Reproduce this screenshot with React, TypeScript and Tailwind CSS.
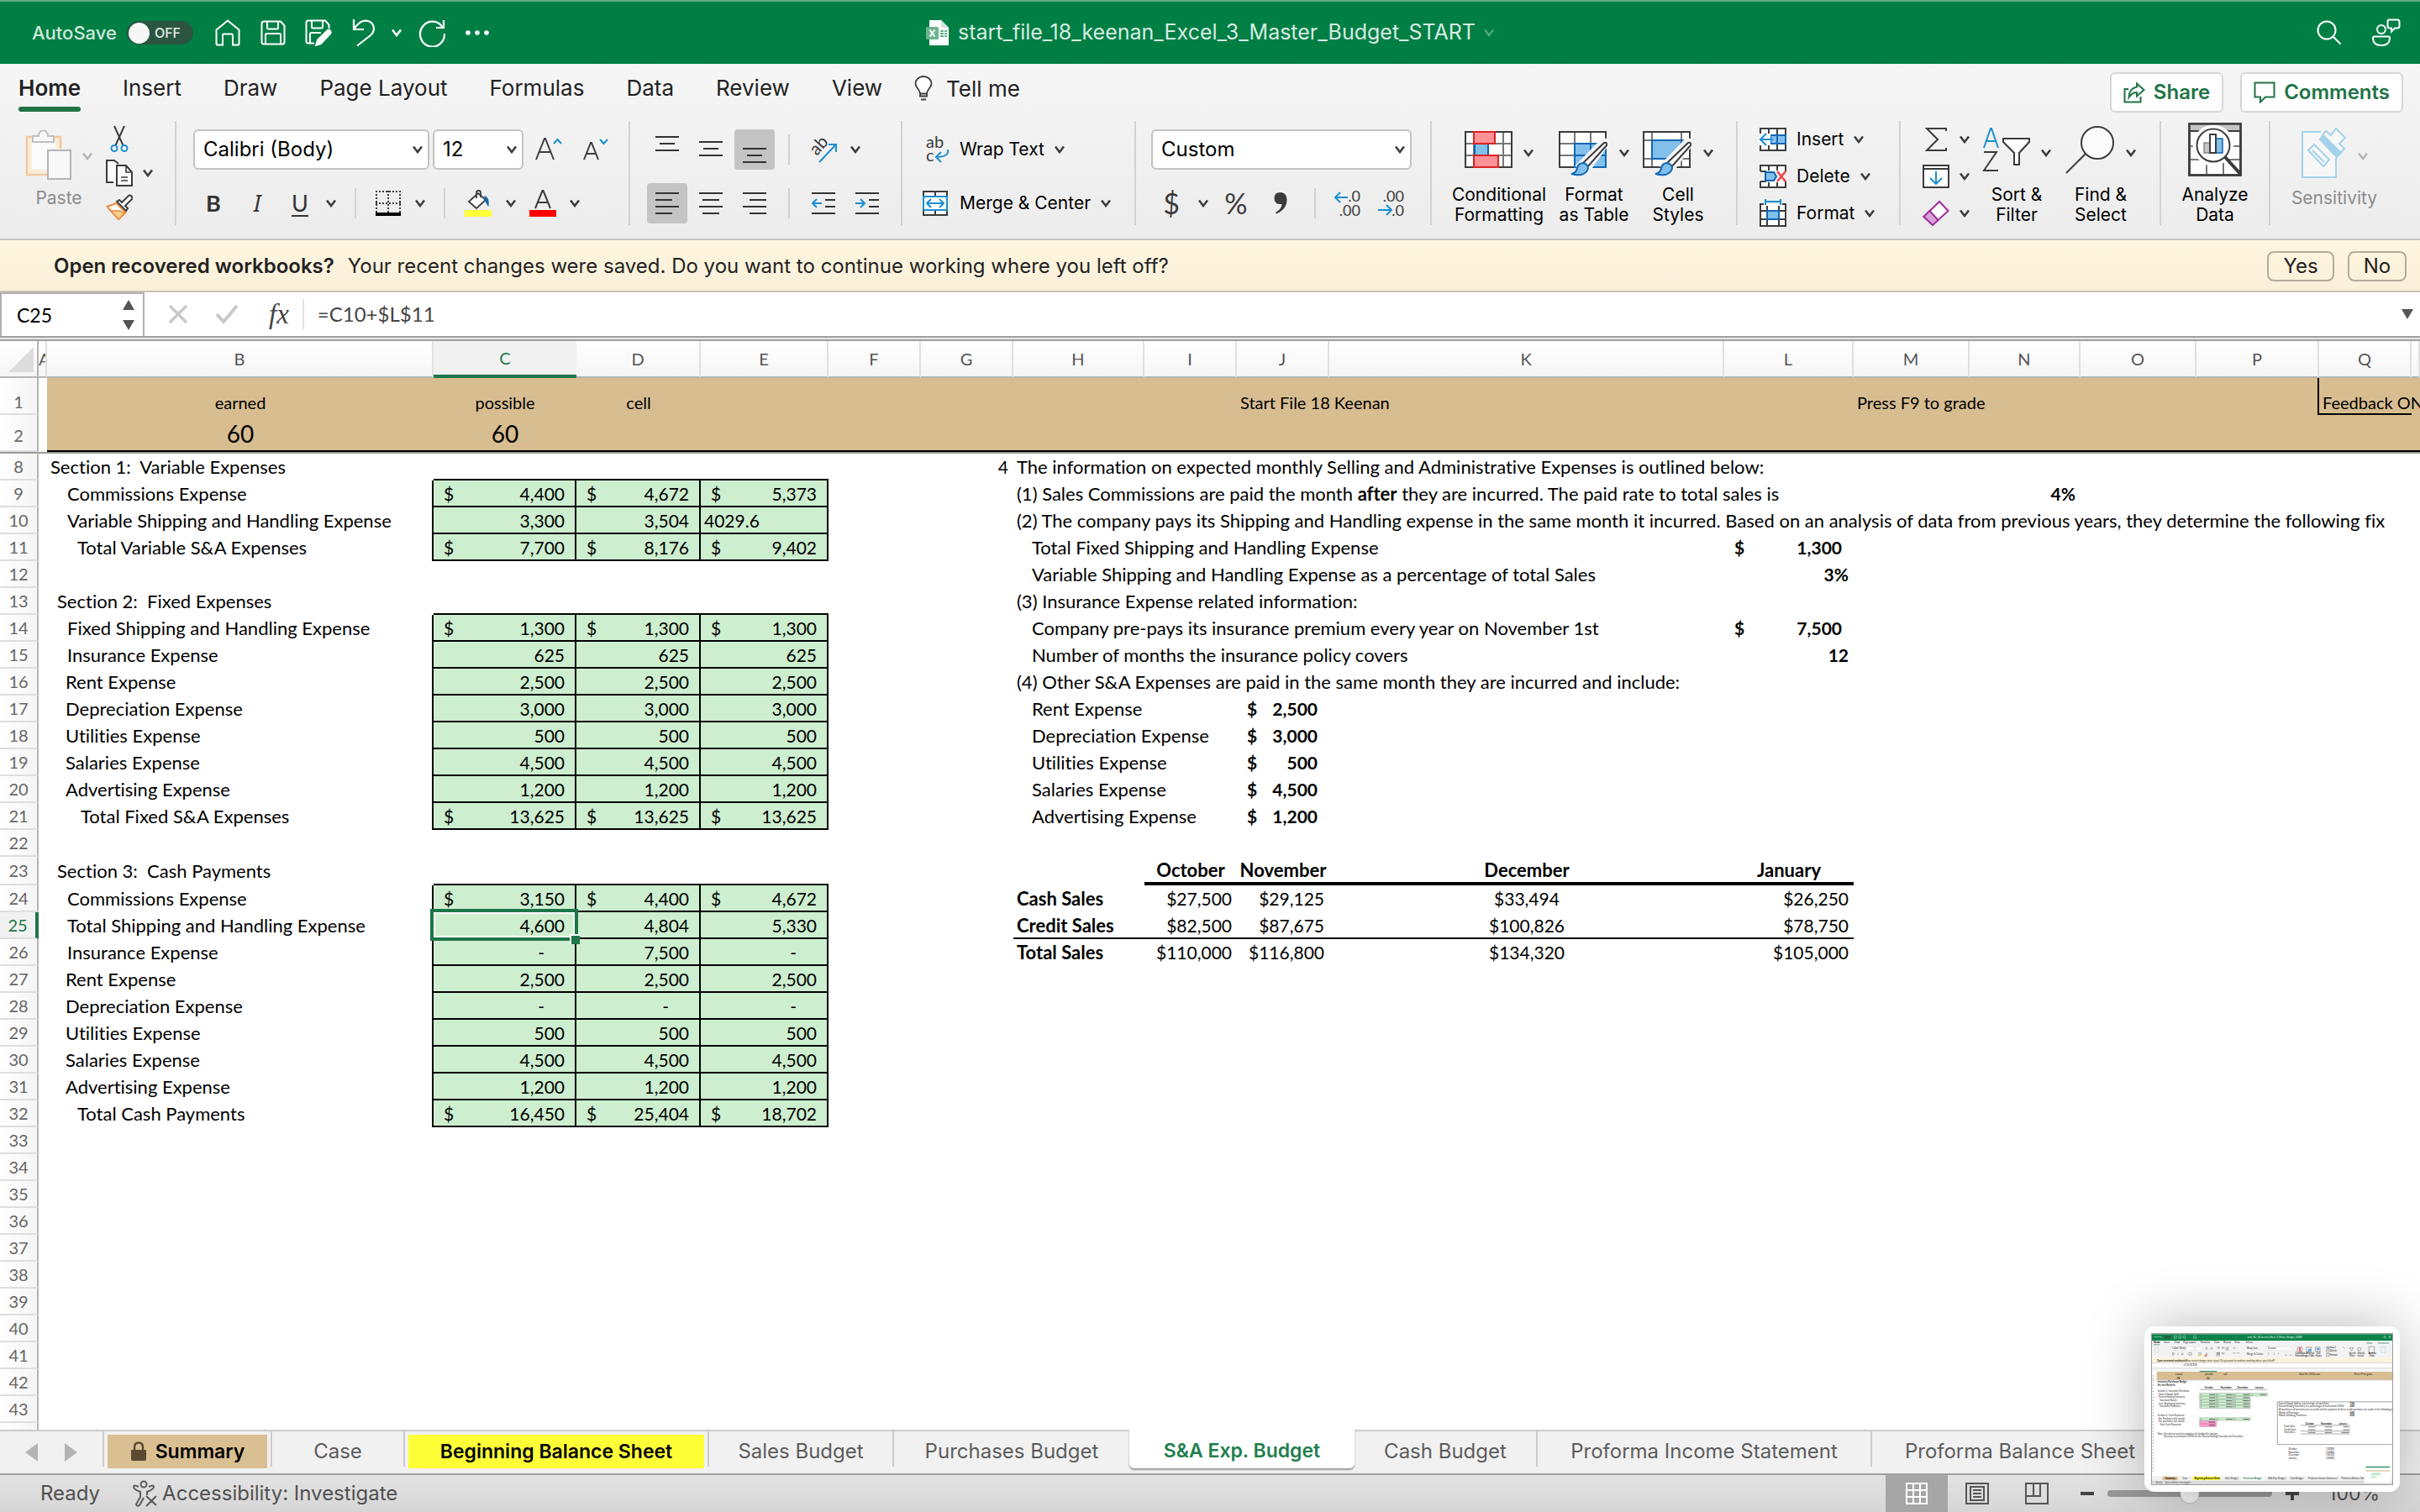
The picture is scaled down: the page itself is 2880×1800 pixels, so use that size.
import React from 'react'

type IconProps = { className?: string }

type Cell = {
    text?: React.ReactNode
    usd?: boolean
    className?: string
}

const columns = [
    { name: 'A', width: 'w-[10px]' },
    { name: 'B', width: 'w-[460px]' },
    { name: 'C', width: 'w-[170px]' },
    { name: 'D', width: 'w-[148px]' },
    { name: 'E', width: 'w-[152px]' },
    { name: 'F', width: 'w-[110px]' },
    { name: 'G', width: 'w-[110px]' },
    { name: 'H', width: 'w-[156px]' },
    { name: 'I', width: 'w-[110px]' },
    { name: 'J', width: 'w-[110px]' },
    { name: 'K', width: 'w-[470px]' },
    { name: 'L', width: 'w-[154px]' },
    { name: 'M', width: 'w-[138px]' },
    { name: 'N', width: 'w-[132px]' },
    { name: 'O', width: 'w-[138px]' },
    { name: 'P', width: 'w-[146px]' },
    { name: 'Q', width: 'w-[110px]' },
    { name: '', width: '' },
]

const rowNumbers = [1, 2, ...Array.from({ length: 37 }, (_, i) => i + 8)]

// label, indent, then the October / November / December amounts
const budgetRows: Record<number, [string, string, string[]?]> = {
    8: ['Section 1:  Variable Expenses', 'pl-1'],
    9: ['Commissions Expense', 'pl-6', ['$4,400', '$4,672', '$5,373']],
    10: ['Variable Shipping and Handling Expense', 'pl-6', ['3,300', '3,504', '4029.6']],
    11: ['Total Variable S&A Expenses', 'pl-9', ['$7,700', '$8,176', '$9,402']],
    13: ['Section 2:  Fixed Expenses', 'pl-3'],
    14: ['Fixed Shipping and Handling Expense', 'pl-6', ['$1,300', '$1,300', '$1,300']],
    15: ['Insurance Expense', 'pl-6', ['625', '625', '625']],
    16: ['Rent Expense', 'pl-[22px]', ['2,500', '2,500', '2,500']],
    17: ['Depreciation Expense', 'pl-[22px]', ['3,000', '3,000', '3,000']],
    18: ['Utilities Expense', 'pl-[22px]', ['500', '500', '500']],
    19: ['Salaries Expense', 'pl-[22px]', ['4,500', '4,500', '4,500']],
    20: ['Advertising Expense', 'pl-[22px]', ['1,200', '1,200', '1,200']],
    21: ['Total Fixed S&A Expenses', 'pl-10', ['$13,625', '$13,625', '$13,625']],
    23: ['Section 3:  Cash Payments', 'pl-3'],
    24: ['Commissions Expense', 'pl-6', ['$3,150', '$4,400', '$4,672']],
    25: ['Total Shipping and Handling Expense', 'pl-6', ['4,600', '4,804', '5,330']],
    26: ['Insurance Expense', 'pl-6', ['-', '7,500', '-']],
    27: ['Rent Expense', 'pl-[22px]', ['2,500', '2,500', '2,500']],
    28: ['Depreciation Expense', 'pl-[22px]', ['-', '-', '-']],
    29: ['Utilities Expense', 'pl-[22px]', ['500', '500', '500']],
    30: ['Salaries Expense', 'pl-[22px]', ['4,500', '4,500', '4,500']],
    31: ['Advertising Expense', 'pl-[22px]', ['1,200', '1,200', '1,200']],
    32: ['Total Cash Payments', 'pl-9', ['$16,450', '$25,404', '$18,702']],
}

const cells: Record<string, Cell> = {
    B1: { text: 'earned', className: 'text-center' },
    C1: { text: 'possible', className: 'text-center' },
    D1: { text: 'cell', className: 'text-center' },
    J1: { text: 'Start File 18 Keenan', className: 'pl-1' },
    M1: { text: 'Press F9 to grade', className: 'pl-1' },
    Q1: { text: 'Feedback ON', className: 'pl-1' },
    B2: { text: '60', className: 'text-center' },
    C2: { text: '60', className: 'text-center' },
    G8: { text: '4', className: 'pr-1.5 text-right' },
    H8: { text: 'The information on expected monthly Selling and Administrative Expenses is outlined below:', className: 'pl-1' },
    H9: {
        text: <>(1) Sales Commissions are paid the month <b>after</b> they are incurred. The paid rate to total sales is</>,
        className: 'pl-1',
    },
    N9: { text: '4%', className: 'pr-1.5 text-right font-bold' },
    H10: {
        text: '(2) The company pays its Shipping and Handling expense in the same month it incurred. Based on an analysis of data from previous years, they determine the following fix',
        className: 'pl-1',
    },
    H11: { text: 'Total Fixed Shipping and Handling Expense', className: 'pl-[22px]' },
    L11: { text: '1,300', usd: true, className: 'font-bold' },
    H12: { text: 'Variable Shipping and Handling Expense as a percentage of total Sales', className: 'pl-[22px]' },
    L12: { text: '3%', className: 'pr-1.5 text-right font-bold' },
    H13: { text: '(3) Insurance Expense related information:', className: 'pl-1' },
    H14: { text: 'Company pre-pays its insurance premium every year on November 1st', className: 'pl-[22px]' },
    L14: { text: '7,500', usd: true, className: 'font-bold' },
    H15: { text: 'Number of months the insurance policy covers', className: 'pl-[22px]' },
    L15: { text: '12', className: 'pr-1.5 text-right font-bold' },
    H16: { text: '(4) Other S&A Expenses are paid in the same month they are incurred and include:', className: 'pl-1' },
    H17: { text: 'Rent Expense', className: 'pl-[22px]' },
    J17: { text: '2,500', usd: true, className: 'font-bold' },
    H18: { text: 'Depreciation Expense', className: 'pl-[22px]' },
    J18: { text: '3,000', usd: true, className: 'font-bold' },
    H19: { text: 'Utilities Expense', className: 'pl-[22px]' },
    J19: { text: '500', usd: true, className: 'font-bold' },
    H20: { text: 'Salaries Expense', className: 'pl-[22px]' },
    J20: { text: '4,500', usd: true, className: 'font-bold' },
    H21: { text: 'Advertising Expense', className: 'pl-[22px]' },
    J21: { text: '1,200', usd: true, className: 'font-bold' },
    I23: { text: 'October', className: 'text-center font-bold' },
    J23: { text: 'November', className: 'text-center font-bold' },
    K23: { text: 'December', className: 'text-center font-bold' },
    L23: { text: 'January', className: 'text-center font-bold' },
    H24: { text: 'Cash Sales', className: 'pl-1 font-bold' },
    I24: { text: '$27,500', className: 'pr-1.5 text-right' },
    J24: { text: '$29,125', className: 'pr-1.5 text-right' },
    K24: { text: '$33,494', className: 'text-center' },
    L24: { text: '$26,250', className: 'pr-1.5 text-right' },
    H25: { text: 'Credit Sales', className: 'pl-1 font-bold' },
    I25: { text: '$82,500', className: 'pr-1.5 text-right' },
    J25: { text: '$87,675', className: 'pr-1.5 text-right' },
    K25: { text: '$100,826', className: 'text-center' },
    L25: { text: '$78,750', className: 'pr-1.5 text-right' },
    H26: { text: 'Total Sales', className: 'pl-1 font-bold' },
    I26: { text: '$110,000', className: 'pr-1.5 text-right' },
    J26: { text: '$116,800', className: 'pr-1.5 text-right' },
    K26: { text: '$134,320', className: 'text-center' },
    L26: { text: '$105,000', className: 'pr-1.5 text-right' },
}

Object.entries(budgetRows).forEach(([row, [label, indent, amounts]]) => {
    cells[`B${row}`] = { text: label, className: `${indent} whitespace-pre` }
    amounts?.forEach((amount, i) => {
        const key = `${'CDE'[i]}${row}`
        if (key === 'E10') cells[key] = { text: amount, className: 'pl-1' }
        else if (amount === '-') cells[key] = { text: '-', className: 'pr-9 text-right' }
        else if (amount[0] === '$') cells[key] = { text: amount.slice(1), usd: true }
        else cells[key] = { text: amount, className: 'pr-3 text-right' }
    })
})

/* ---------- icons ---------- */

function Chevron({ className = 'text-[#3c3c3c]' }: IconProps) {
    return (
        <svg viewBox="0 0 12 10" className={`h-[10px] w-3 shrink-0 ${className}`} fill="none" stroke="currentColor" strokeWidth="2.6">
            <path d="M1 1.5 6 8 11 1.5" />
        </svg>
    )
}

function HomeIcon() {
    return (
        <svg viewBox="0 0 30 32" className="h-8 w-[30px]" fill="none" stroke="white" strokeWidth="2">
            <path d="M1.500 12.500 15 1.500l13.500 11V29q0 1.500-1.500 1.500h-6V19q0-1.500-1.500-1.500h-9Q9 17.500 9 19v11.500H3q-1.500 0-1.500-1.500Z" />
        </svg>
    )
}

function SaveIcon() {
    return (
        <svg viewBox="0 0 30 30" className="size-[30px]" fill="none" stroke="white" strokeWidth="2">
            <path d="M4 1.500h20l4.500 5V26q0 2.500-2.500 2.500H4Q1.500 28.500 1.500 26V4Q1.500 1.500 4 1.500Z" />
            <path d="M8 2v7q0 1.500 1.500 1.500h10Q21 10.500 21 9V2M6 28V17.500Q6 16 7.500 16h15q1.500 0 1.500 1.500V28" />
        </svg>
    )
}

function SaveAsIcon() {
    return (
        <svg viewBox="0 0 32 32" className="size-8" fill="none" stroke="white" strokeWidth="2">
            <path d="M11 28.500H4Q1.500 28.500 1.500 26V4Q1.500 1.500 4 1.500h20l4.500 5V11" />
            <path d="M8 2v7q0 1.500 1.500 1.500h10Q21 10.500 21 9V2M6 28V17.500Q6 16 7.500 16H19" />
            <path d="m13 31 2-6.500L27 13q4-1 3.500 3.500L19 29Z" fill="white" />
        </svg>
    )
}

function UndoIcon() {
    return (
        <svg viewBox="0 0 28 34" className="h-[34px] w-7" fill="none" stroke="white" strokeWidth="2.200">
            <path d="M2 1v12h12M2 13C7 5 13 1.500 19 3c8 2.500 9 11.500 3 17L6 32.500" />
        </svg>
    )
}

function RedoIcon() {
    return (
        <svg viewBox="0 0 34 34" className="size-[34px]" fill="none" stroke="white" strokeWidth="2.200">
            <path d="M31 2v9h-9M30 11A14.500 15 0 1 0 32 18" />
        </svg>
    )
}

function WorkbookIcon() {
    return (
        <svg viewBox="0 0 28 30" className="h-[30px] w-7">
            <path d="M4 0h14l9 9v21H4Z" fill="white" />
            <path d="M18 0v9h9Z" fill="#d5e4db" />
            <path d="M17 12h4v2h-4zM22 12h3v2h-3zM17 15h4v2h-4zM22 15h3v2h-3zM17 18h4v2h-4zM22 18h3v2h-3z" fill="#5fae86" />
            <rect y="8" width="15" height="15" rx="1.500" fill="#6db38f" />
            <path d="m4.500 11.500 6 8M10.500 11.500l-6 8" stroke="white" strokeWidth="2" />
        </svg>
    )
}

function SearchIcon() {
    return (
        <svg viewBox="0 0 30 30" className="size-[30px]" fill="none" stroke="white" strokeWidth="2">
            <circle cx="12" cy="12" r="10.500" />
            <path d="m19.500 19.500 9 9" />
        </svg>
    )
}

function PeopleIcon() {
    return (
        <svg viewBox="0 0 34 34" className="size-[34px]" fill="none" stroke="white" strokeWidth="2">
            <circle cx="11" cy="13" r="5" />
            <path d="M2 21.500h18q1 0 1 1.500 0 9-10 9T1 23q0-1.500 1-1.500ZM20 1.500h10q2.500 0 2.500 2.500v5q0 2.500-2.500 2.500h-3l-4 4v-4h-2q-2.500 0-2.500-2.500V4q0-2.500 1.500-2.500Z" />
        </svg>
    )
}

function BulbIcon() {
    return (
        <svg viewBox="0 0 22 30" className="h-[30px] w-[22px]" fill="none" stroke="#3c3c3c" strokeWidth="1.800">
            <path d="M7 21.500C7 16 1.500 15 1.500 9.500a9.500 8.500 0 0 1 19 0C20.500 15 15 16 15 21.500v3H7ZM7 21.500h8" fill="white" />
            <path d="M8 28.500h6" strokeWidth="2" />
        </svg>
    )
}

function ShareIcon() {
    return (
        <svg viewBox="0 0 26 26" className="size-[26px]" fill="none" stroke="#217346" strokeWidth="2">
            <path d="M6 9H1.500v15.500h19V18" />
            <path d="M16 2.500v4Q7 8 6.500 19q4-6 9.500-6v4.500L24.500 10Z" />
        </svg>
    )
}

function CommentIcon() {
    return (
        <svg viewBox="0 0 26 26" className="size-[26px]" fill="none" stroke="#217346" strokeWidth="2">
            <path d="M1.500 1.500h23v17H14L8 24.500v-6H1.500Z" />
        </svg>
    )
}

function PasteIcon() {
    return (
        <svg viewBox="0 0 56 60" className="h-[60px] w-14" fill="none" strokeWidth="2">
            <path d="M9 9H2v45h24M33 9h9v14" stroke="#f3c79d" strokeWidth="2.500" />
            <path d="M4 11h36v12H26v29H4Z" fill="#f9edd4" />
            <path d="M8 15h28v8H26v25H8Z" fill="#fbfbfb" />
            <path d="M9 15V8h7q0-6.500 5.500-6.500T27 8h7v7Z" fill="#f8f8f8" stroke="#c0c0c0" />
            <path d="M27 25h27v34H27Z" fill="#f8f8f8" stroke="#b5b5b5" />
        </svg>
    )
}

function CutIcon() {
    return (
        <svg viewBox="0 0 22 32" className="h-8 w-[22px]" fill="none" strokeWidth="2">
            <path d="m5 1 10.500 23M17 1 6.500 24" stroke="#3c3c3c" />
            <circle cx="5" cy="27.500" r="3.500" stroke="#1a8fd1" />
            <circle cx="17" cy="27.500" r="3.500" stroke="#1a8fd1" />
        </svg>
    )
}

function CopyIcon() {
    return (
        <svg viewBox="0 0 32 32" className="size-8" fill="#fbfbfb" stroke="#3c3c3c" strokeWidth="2">
            <path d="M9 27H1V1h9l5 4" />
            <path d="M13 7h11l7 8v16H13Z" />
            <path d="M24 7v8h7M18 21h8M18 25h8" fill="none" strokeWidth="1.600" />
        </svg>
    )
}

function PainterIcon() {
    return (
        <svg viewBox="0 0 32 32" className="size-8" fill="none" strokeWidth="2">
            <path d="m1.500 15 11-4 11 11L15 30Z" fill="#fff" stroke="#ee8a3c" />
            <path d="m6 20 11 0 5 3-7 7Z" fill="#f7cf8f" stroke="#ee8a3c" strokeWidth="1.500" />
            <path d="m13 9 3-2 3 3 8-8q2-1 3.500.5T31 6l-8 8 3 3-2 3Z" fill="#fbfbfb" stroke="#3c3c3c" />
        </svg>
    )
}

function FontSizeIcon({ shrink = false }: { shrink?: boolean }) {
    return (
        <svg viewBox="0 0 34 32" className="h-8 w-[34px]" fill="none" strokeWidth="2">
            {shrink ? (
                <>
                    <path d="M3 28 11 8h1l8 20M6 21h11" stroke="#3c3c3c" />
                    <path d="m22 4 4.500 5L31 4" stroke="#1a8fd1" />
                </>
            ) : (
                <>
                    <path d="m1 28 10-25h1l10 25M5 19h13" stroke="#3c3c3c" />
                    <path d="m22 9 4.500-5L31 9" stroke="#1a8fd1" />
                </>
            )}
        </svg>
    )
}

function BordersIcon() {
    return (
        <svg viewBox="0 0 30 30" className="size-[30px]" fill="none" stroke="#3c3c3c" strokeWidth="2">
            <path d="M0 1h30M0 15h30M1 0v26M15 0v26M29 0v26" strokeDasharray="2 2" />
            <path d="M0 28h30" stroke="black" strokeWidth="4" />
        </svg>
    )
}

function FillColorIcon() {
    return (
        <svg viewBox="0 0 32 32" className="size-8" fill="none" stroke="#3c3c3c" strokeWidth="1.800">
            <path d="m5 14 11-10 9 8-11 10ZM14 10V3q0-2 2.500-2T19 3v6" fill="#fff" />
            <path d="M23 7q7 1 5.500 13Q24 15 24 10Z" fill="#1067b3" stroke="none" />
            <path d="M0 24h32v8H0Z" fill="#ffff38" stroke="none" />
        </svg>
    )
}

function FontColorIcon() {
    return (
        <svg viewBox="0 0 32 32" className="size-8" fill="none" stroke="#3c3c3c" strokeWidth="2">
            <path d="m7 22 8.500-21h1L25 22M10 15h12" />
            <path d="M0 24h32v8H0Z" fill="#ff0000" stroke="none" />
        </svg>
    )
}

// y position, left and right end of every bar
function LinesIcon({ lines }: { lines: [number, number, number][] }) {
    return (
        <svg viewBox="0 0 28 32" className="h-8 w-7" stroke="#333" strokeWidth="2" shapeRendering="crispEdges">
            {lines.map(([y, from, to]) => (
                <path key={y} d={`M${from} ${y}H${to}`} />
            ))}
        </svg>
    )
}

function IndentIcon({ out = false }: { out?: boolean }) {
    return (
        <svg viewBox="0 0 28 32" className="h-8 w-7" fill="none" stroke="#333" strokeWidth="2">
            <path d="M0 4h28M16 12h12M16 20h12M0 28h28" />
            <path d={out ? 'M12 16H1.500M6 11l-5 5 5 5' : 'M0 16h11M6 11l5 5-5 5'} stroke="#1a8fd1" />
        </svg>
    )
}

function OrientationIcon() {
    return (
        <svg viewBox="0 0 34 32" className="h-8 w-[34px] overflow-visible" fill="none" strokeWidth="2">
            <text x="0" y="0" transform="translate(9 24) rotate(-48)" fontSize="21" fontFamily="Lato" fill="#3c3c3c">ab</text>
            <path d="m12 31 19-20M23 10h9v9" stroke="#1a8fd1" />
        </svg>
    )
}

function WrapIcon() {
    return (
        <svg viewBox="0 0 30 34" className="h-[34px] w-[30px] overflow-visible" fill="none" strokeWidth="2">
            <text x="4" y="15" fontSize="20" fontFamily="Lato" fill="#3c3c3c">ab</text>
            <text x="4" y="31" fontSize="20" fontFamily="Lato" fill="#3c3c3c">c</text>
            <path d="M30 17q2 9-14 9M22 20l-6 6 6 6" stroke="#1a8fd1" />
        </svg>
    )
}

function MergeIcon() {
    return (
        <svg viewBox="0 0 30 30" className="size-[30px]" fill="none" stroke="#3c3c3c" strokeWidth="2">
            <path d="M1 1h28v28H1ZM15 1v6M15 23v6" fill="#fafafa" />
            <path d="M1 7h28v16H1Z" fill="#fff" stroke="#1a8fd1" />
            <path d="M5 15h20M10 10l-5 5 5 5M20 10l5 5-5 5" stroke="#1a8fd1" />
        </svg>
    )
}

function DecimalIcon({ less = false }: { less?: boolean }) {
    return (
        <svg viewBox="0 0 32 32" className="size-8 overflow-visible" fill="none" stroke="#1a8fd1" strokeWidth="2">
            <g fontSize="18" fontFamily="Lato" fill="#3c3c3c" stroke="none" textAnchor="end">
                <text x="31" y="14">{less ? '.00' : '.0'}</text>
                <text x="31" y="31">{less ? '.0' : '.00'}</text>
            </g>
            {less ? <path d="M0 24h15M10 18l6 6-6 6" /> : <path d="M16 9H2M7 3 1 9l6 6" />}
        </svg>
    )
}

function ConditionalIcon() {
    return (
        <svg viewBox="0 0 58 58" className="size-[58px]" fill="none" stroke="#3c3c3c" strokeWidth="2">
            <path d="M1 5h55v42H1Z" fill="#fff" />
            <path d="M1 19h55M1 33h55M11 5v42M46 5v42" stroke="#777" />
            <path d="M12 19h16v14H12Z" fill="#83bfeb" stroke="#1067b3" />
            <path d="M29 20h16v12H29Z" fill="#fff" stroke="none" />
            <path d="M1 5h55v42H1Z" />
            <path d="M11 5h25v14H11ZM11 33h29v14H11Z" fill="#ff9297" stroke="#dd2222" />
        </svg>
    )
}

function Brush() {
    return (
        <>
            <path d="M24 45 52 16q5-2 5 3L34 51Z" fill="#f4f4f4" stroke="#f4f4f4" strokeWidth="6" />
            <path d="M28 43 54 18q4-1 3 3L33 48Z" fill="#fff" stroke="#3c3c3c" />
            <path d="M15 55q6-1 7-7t8-6q7 3 4 9-5 8-19 4Z" fill="#83bfeb" stroke="#1067b3" />
        </>
    )
}

function FormatTableIcon() {
    return (
        <svg viewBox="0 0 60 58" className="h-[58px] w-[60px]" fill="none" stroke="#3c3c3c" strokeWidth="2">
            <path d="M1 5h55v42H1Z" fill="#fff" />
            <path d="M1 19h55M1 33h55M19 5v42M38 5v42" stroke="#777" />
            <path d="M1 5h55v42H1Z" />
            <path d="M19 19h37v28H19ZM19 33h37M38 19v28" fill="#83bfeb" stroke="#1067b3" />
            <Brush />
        </svg>
    )
}

function CellStylesIcon() {
    return (
        <svg viewBox="0 0 60 58" className="h-[58px] w-[60px]" fill="none" stroke="#3c3c3c" strokeWidth="2">
            <path d="M1 5h55v42H1Z" fill="#fff" />
            <path d="M1 15h55M1 37h55M11 5v42M46 5v42" stroke="#777" />
            <path d="M1 5h55v42H1Z" />
            <path d="M11 15h35v22H11Z" fill="#83bfeb" stroke="#1067b3" />
            <Brush />
        </svg>
    )
}

function InsertIcon() {
    return (
        <svg viewBox="0 0 32 30" className="h-[30px] w-8" fill="none" stroke="#3c3c3c" strokeWidth="2">
            <path d="M1 2h30v26H1ZM11 2v26M21 2v26" fill="#fff" />
            <path d="M13 10h18v10H13ZM21 10v10" fill="#83bfeb" stroke="#1067b3" />
            <path d="M0 8h13v14H0Z" fill="#fff" stroke="none" />
            <path d="M16 15H1.500M8 8l-7 7 7 7" stroke="#1a8fd1" />
        </svg>
    )
}

function DeleteIcon() {
    return (
        <svg viewBox="0 0 32 30" className="h-[30px] w-8" fill="none" stroke="#3c3c3c" strokeWidth="2">
            <path d="M1 9V2h30v7M1 21v7h30v-7M1 9h7M1 21h7M11 2v6M21 2v6M11 22v6M21 22v6" fill="#fff" />
            <path d="M7 10h10l3 5-3 5H7Z" fill="#83bfeb" stroke="#1067b3" />
            <path d="m21 9 10 12M31 9 21 21" stroke="#ee4444" strokeWidth="2.500" />
        </svg>
    )
}

function FormatIcon() {
    return (
        <svg viewBox="0 0 32 34" className="h-[34px] w-8" fill="none" stroke="#3c3c3c" strokeWidth="2">
            <path d="M5 6H1v26h30V6h-4M9 8v24M23 8v24M1 14h30M1 24h30" fill="#fff" />
            <path d="M9 14h14v10H9Z" fill="#83bfeb" stroke="#1067b3" />
            <path d="M7 3h18M7 0v7M25 0v7" stroke="#1a8fd1" />
        </svg>
    )
}

function SigmaIcon() {
    return (
        <svg viewBox="0 0 32 30" className="h-[30px] w-8" fill="none" stroke="#3c3c3c" strokeWidth="2">
            <path d="M28 5V2H5l13 13L5 28h23v-3" />
        </svg>
    )
}

function FillDownIcon() {
    return (
        <svg viewBox="0 0 32 30" className="h-[30px] w-8" fill="none" stroke="#3c3c3c" strokeWidth="2">
            <path d="M1 2h30v26H1ZM1 6h30" fill="#fff" />
            <path d="M16 9v14M9 17l7 7 7-7" stroke="#1a8fd1" />
        </svg>
    )
}

function EraserIcon() {
    return (
        <svg viewBox="0 0 32 32" className="size-8" fill="#fff" stroke="#9c2f9c" strokeWidth="2">
            <path d="M1.500 20 20 2l10.500 11L12 30Z" />
            <path d="m1.500 20 7-7L18.500 24 12 30Z" fill="#dba0db" />
        </svg>
    )
}

function SortFilterIcon() {
    return (
        <svg viewBox="0 0 58 58" className="size-[58px]" fill="none" stroke="#3c3c3c" strokeWidth="2">
            <path d="m2 24 8-23h1l8 23M5 16h11" stroke="#1a8fd1" />
            <path d="M2 29h15L2 51h17" />
            <path d="M25 13h31v4L44 30v14h-6V30L25 17Z" fill="#fff" />
        </svg>
    )
}

function FindIcon() {
    return (
        <svg viewBox="0 0 60 60" className="size-[60px]" fill="none" stroke="#3c3c3c" strokeWidth="2">
            <circle cx="38" cy="20" r="19" fill="#fbfbfb" />
            <path d="M24 33 1 56" />
        </svg>
    )
}

function AnalyzeIcon() {
    return (
        <svg viewBox="0 0 64 64" className="size-16" fill="none" stroke="#3c3c3c" strokeWidth="2.500">
            <path d="M1.500 1.500h61v61h-61Z" fill="#fff" />
            <path d="M2 2h60v8H2Z" fill="#c5c5c5" stroke="none" />
            <path d="M1 10h62" strokeWidth="2" />
            <path d="M2 28h60M2 44h60M22 44v18M42 44v18" stroke="#777" strokeWidth="2" />
            <circle cx="30" cy="27" r="23" fill="#fff" stroke="#fff" />
            <path d="M1.500 1.500h61v61h-61Z" />
            <circle cx="30" cy="27" r="19.500" fill="#fff" strokeWidth="2" />
            <path d="M19 24h8v12h-8Z" fill="#c5c5c5" stroke="#888" strokeWidth="1.500" />
            <path d="M33 19h8v17h-8Z" fill="#83bfeb" stroke="#1067b3" strokeWidth="1.500" />
            <path d="M26 14h7v22h-7Z" fill="#fff" strokeWidth="2" />
            <path d="m44 41 19 21" strokeWidth="4" />
        </svg>
    )
}

function SensitivityIcon() {
    return (
        <svg viewBox="0 0 56 62" className="h-[62px] w-14" fill="none" stroke="#a3d2ea" strokeWidth="2">
            <path d="M24 5H2v54h40V36" fill="#f7f7f7" />
            <path d="M9 27 16 20 34 38l-7 8ZM14 27l14 14" fill="#f7f7f7" />
            <path d="m24 12 6-8 6 5 6-8 11 11-7 7 6 6-7 7Z" fill="#f7f7f7" />
            <path d="m23 14 5-4 20 20-5 5Z" fill="#a3d2ea" />
        </svg>
    )
}

function AccessibilityIcon() {
    return (
        <svg viewBox="0 0 32 32" className="size-8" fill="none" stroke="#5a5a5a" strokeWidth="2">
            <circle cx="14" cy="5" r="3.500" />
            <path d="M8 8Q2 5 2 8t8 6v6L5 29q1 3 4 1l5-9M20 8q6-3 6 0t-8 6v4M17 19l12 11M29 19 17 31" />
        </svg>
    )
}

/* ---------- ribbon pieces ---------- */

function IconButton({ label, width = 'w-12', active = false, children }: { label: string; width?: string; active?: boolean; children: React.ReactNode }) {
    return (
        <button
            aria-label={label}
            className={`flex h-12 shrink-0 items-center justify-center rounded ${width} ${active ? 'bg-[#c4c4c4]' : ''}`}
        >
            {children}
        </button>
    )
}

function MenuButton({ label }: { label: string }) {
    return (
        <IconButton label={label} width="w-7">
            <Chevron />
        </IconButton>
    )
}

function Divider({ gap }: { gap: string }) {
    return <span className={`h-9 w-0.5 shrink-0 bg-[#d2d2d2] ${gap}`} />
}

function Group({ className, children }: { className: string; children: React.ReactNode }) {
    return <section className={`flex h-[124px] shrink-0 border-r-2 border-[#d2d2d2] ${className}`}>{children}</section>
}

function BigButton({ icon, lines, width, menu = true, faded = false }: { icon: React.ReactNode; lines: string[]; width: string; menu?: boolean; faded?: boolean }) {
    return (
        <button className={`flex flex-col items-center gap-1.5 text-[21px] leading-6 ${width} ${faded ? 'text-[#8c8c8c]' : 'text-black'}`}>
            <span className="flex h-[74px] items-end justify-center gap-3 pb-1">
                {icon}
                {menu && (
                    <span className="flex h-14 items-center">
                        <Chevron className={faded ? 'text-[#b5b5b5]' : 'text-[#3c3c3c]'} />
                    </span>
                )}
            </span>
            <span className="flex flex-col whitespace-nowrap">
                {lines.map((line) => (
                    <span key={line}>{line}</span>
                ))}
            </span>
        </button>
    )
}

function SelectBox({ label, value, width }: { label: string; value: string; width: string }) {
    return (
        <label className={`relative flex items-center ${width}`}>
            <select
                aria-label={label}
                defaultValue={value}
                className="h-12 w-full appearance-none rounded-md border-2 border-[#c3c3c3] bg-white pl-2.5 text-2xl text-black"
            >
                <option>{value}</option>
            </select>
            <span className="pointer-events-none absolute right-2">
                <Chevron />
            </span>
        </label>
    )
}

function TitleBar() {
    return (
        <header className="grid h-[76px] shrink-0 grid-cols-[1fr_auto_1fr] items-center border-t-2 border-[#5fa983] bg-[#007f45] text-white">
            <div className="flex items-center pl-[38px]">
                <label className="flex items-center gap-3 text-[22px] font-medium text-[#cfe8db]">
                    AutoSave
                    <input type="checkbox" className="peer sr-only" />
                    <span className="flex h-[28px] w-[79px] items-center gap-1.5 rounded-full bg-[#2b5540] pl-0.5 text-[16px] text-[#e0ece6]">
                        <span className="size-[25px] rounded-full bg-[#f7f7f7]" />
                        OFF
                    </span>
                </label>
                <div className="flex items-center pl-3.5">
                    <IconButton label="Home" width="w-[54px]"><HomeIcon /></IconButton>
                    <IconButton label="Save" width="w-[54px]"><SaveIcon /></IconButton>
                    <IconButton label="Save As" width="w-[54px]"><SaveAsIcon /></IconButton>
                    <IconButton label="Undo" width="w-[54px]"><UndoIcon /></IconButton>
                    <IconButton label="Undo history" width="w-6"><Chevron className="text-white" /></IconButton>
                    <IconButton label="Redo" width="w-[60px]"><RedoIcon /></IconButton>
                    <IconButton label="More" width="w-12">
                        <svg viewBox="0 0 28 6" className="h-1.5 w-7" fill="white">
                            <circle cx="3" cy="3" r="2.800" />
                            <circle cx="14" cy="3" r="2.800" />
                            <circle cx="25" cy="3" r="2.800" />
                        </svg>
                    </IconButton>
                </div>
            </div>
            <h1 className="flex items-center gap-2.5 text-[25px] text-[#d7ece1]">
                <WorkbookIcon />
                start_file_18_keenan_Excel_3_Master_Budget_START
                <Chevron className="text-[#4da67c]" />
            </h1>
            <div className="flex items-center justify-end gap-5 pr-4">
                <IconButton label="Search"><SearchIcon /></IconButton>
                <IconButton label="People"><PeopleIcon /></IconButton>
            </div>
        </header>
    )
}

const ribbonTabs = ['Home', 'Insert', 'Draw', 'Page Layout', 'Formulas', 'Data', 'Review', 'View']

function RibbonTabs() {
    return (
        <div className="flex h-16 items-center justify-between pr-5 pl-[22px]">
            <nav className="flex h-full items-center gap-[50px] text-[26px] text-[#222]">
                {ribbonTabs.map((tab) => (
                    <a
                        key={tab}
                        href="#"
                        className={`flex flex-col pt-1 whitespace-nowrap ${tab === 'Home' ? 'font-semibold' : ''}`}
                    >
                        <span className="leading-9">{tab}</span>
                        <span className={`mt-1 h-1.5 rounded-full ${tab === 'Home' ? 'bg-[#217346]' : ''}`} />
                    </a>
                ))}
                <a href="#" className="-ml-3 flex items-center gap-4 pb-1.5 whitespace-nowrap">
                    <BulbIcon />
                    Tell me
                </a>
            </nav>
            <div className="flex gap-5 pt-1 text-2xl font-semibold text-[#217346]">
                <button className="flex h-12 items-center gap-2.5 rounded-md border-2 border-[#d6d6d6] bg-white px-3.5">
                    <ShareIcon />
                    Share
                </button>
                <button className="flex h-12 items-center gap-2.5 rounded-md border-2 border-[#d6d6d6] bg-white px-3.5">
                    <CommentIcon />
                    Comments
                </button>
            </div>
        </div>
    )
}

function Ribbon() {
    return (
        <div className="shrink-0 border-b-2 border-[#c6c6c6] bg-gradient-to-b from-[#f6f6f6] to-[#ececec]">
            <RibbonTabs />
            <div className="flex h-[144px] pt-1">
                <Group className="w-[210px] pl-7">
                    <div className="flex flex-col items-center">
                        <BigButton icon={<PasteIcon />} lines={['Paste']} width="w-[84px]" faded />
                    </div>
                    <div className="flex flex-col pl-3.5">
                        <button aria-label="Cut" className="flex h-11 w-8 items-center justify-center"><CutIcon /></button>
                        <button aria-label="Copy" className="flex h-11 items-center gap-3">
                            <CopyIcon />
                            <Chevron />
                        </button>
                        <button aria-label="Format Painter" className="flex h-11 items-center"><PainterIcon /></button>
                    </div>
                </Group>

                <Group className="w-[540px] flex-col gap-4 pt-2.5 pl-5">
                    <div className="flex">
                        <SelectBox label="Font" value="Calibri (Body)" width="w-[281px]" />
                        <span className="w-1" />
                        <SelectBox label="Font size" value="12" width="w-[108px]" />
                        <IconButton label="Increase font size" width="w-[62px]"><FontSizeIcon /></IconButton>
                        <IconButton label="Decrease font size" width="w-12"><FontSizeIcon shrink /></IconButton>
                    </div>
                    <div className="flex items-center text-[27px] text-[#333]">
                        <IconButton label="Bold"><span className="font-['Lato',sans-serif] font-bold">B</span></IconButton>
                        <IconButton label="Italic" width="w-14"><span className="font-['Noto_Sans',sans-serif] italic">I</span></IconButton>
                        <IconButton label="Underline" width="w-[46px]"><span className="font-['Lato',sans-serif] underline underline-offset-4">U</span></IconButton>
                        <MenuButton label="Underline options" />
                        <Divider gap="mx-3.5" />
                        <IconButton label="Borders"><BordersIcon /></IconButton>
                        <MenuButton label="Border options" />
                        <Divider gap="mx-3.5" />
                        <IconButton label="Fill color" width="w-[50px]"><FillColorIcon /></IconButton>
                        <MenuButton label="Fill color options" />
                        <IconButton label="Font color"><FontColorIcon /></IconButton>
                        <MenuButton label="Font color options" />
                    </div>
                </Group>

                <Group className="w-[324px] flex-col gap-4 pt-2.5 pl-5">
                    <div className="flex items-center">
                        <div className="flex gap-1">
                            <IconButton label="Top align"><LinesIcon lines={[[1, 0, 28], [9, 5, 23], [17, 0, 28]]} /></IconButton>
                            <IconButton label="Middle align"><LinesIcon lines={[[7, 0, 28], [15, 5, 23], [23, 0, 28]]} /></IconButton>
                            <IconButton label="Bottom align" active><LinesIcon lines={[[15, 0, 28], [23, 5, 23], [31, 0, 28]]} /></IconButton>
                        </div>
                        <Divider gap="mx-4" />
                        <IconButton label="Orientation"><OrientationIcon /></IconButton>
                        <MenuButton label="Orientation options" />
                    </div>
                    <div className="flex items-center">
                        <div className="flex gap-1">
                            <IconButton label="Align left" active><LinesIcon lines={[[4, 0, 28], [12, 0, 20], [20, 0, 28], [28, 0, 20]]} /></IconButton>
                            <IconButton label="Center"><LinesIcon lines={[[4, 0, 28], [12, 4, 24], [20, 0, 28], [28, 4, 24]]} /></IconButton>
                            <IconButton label="Align right"><LinesIcon lines={[[4, 0, 28], [12, 8, 28], [20, 0, 28], [28, 8, 28]]} /></IconButton>
                        </div>
                        <Divider gap="mx-4" />
                        <div className="flex gap-1">
                            <IconButton label="Decrease indent"><IndentIcon out /></IconButton>
                            <IconButton label="Increase indent"><IndentIcon /></IconButton>
                        </div>
                    </div>
                </Group>

                <Group className="w-[278px] flex-col gap-4 pt-2.5 pl-6 text-[21px]">
                    <button className="flex h-12 items-center gap-3 whitespace-nowrap"><span className="w-8"><WrapIcon /></span>Wrap Text<Chevron /></button>
                    <button className="flex h-12 items-center gap-3 whitespace-nowrap"><span className="w-8"><MergeIcon /></span>Merge &amp; Center<Chevron /></button>
                </Group>

                <Group className="w-[352px] flex-col gap-4 pt-2.5 pl-[18px]">
                    <SelectBox label="Number format" value="Custom" width="w-[310px]" />
                    <div className="flex items-center font-['Lato',sans-serif] text-[34px] leading-9 text-[#3c3c3c]">
                        <IconButton label="Currency">$</IconButton>
                        <MenuButton label="Currency options" />
                        <IconButton label="Percent" width="w-[50px]">%</IconButton>
                        <IconButton label="Comma style" width="w-14">
                            <svg viewBox="0 0 16 26" className="h-[26px] w-4" fill="#3c3c3c">
                                <path d="M7.500 0Q15.500 0 15.500 9 15.500 20 3 25.500L2 24Q9 20 9.500 14 .5 15 .5 7 .5 0 7.500 0Z" />
                            </svg>
                        </IconButton>
                        <Divider gap="mx-3" />
                        <IconButton label="Increase decimal" width="w-[52px]"><DecimalIcon /></IconButton>
                        <IconButton label="Decrease decimal" width="w-[52px]"><DecimalIcon less /></IconButton>
                    </div>
                </Group>

                <Group className="w-[364px] pl-5">
                    <BigButton icon={<ConditionalIcon />} lines={['Conditional', 'Formatting']} width="w-[120px]" />
                    <BigButton icon={<FormatTableIcon />} lines={['Format', 'as Table']} width="w-[106px]" />
                    <BigButton icon={<CellStylesIcon />} lines={['Cell', 'Styles']} width="w-[94px]" />
                </Group>

                <Group className="w-[194px] flex-col pl-[26px] text-[21px]">
                    <button className="flex h-11 shrink-0 items-center gap-3"><InsertIcon />Insert<Chevron /></button>
                    <button className="flex h-11 shrink-0 items-center gap-3"><DeleteIcon />Delete<Chevron /></button>
                    <button className="flex h-11 shrink-0 items-center gap-3"><FormatIcon />Format<Chevron /></button>
                </Group>

                <Group className="w-[310px] pl-[26px]">
                    <div className="flex flex-col">
                        <button aria-label="AutoSum" className="flex h-11 shrink-0 items-center gap-3"><SigmaIcon /><Chevron /></button>
                        <button aria-label="Fill" className="flex h-11 shrink-0 items-center gap-3"><FillDownIcon /><Chevron /></button>
                        <button aria-label="Clear" className="flex h-11 shrink-0 items-center gap-3"><EraserIcon /><Chevron /></button>
                    </div>
                    <span className="w-1.5" />
                    <BigButton icon={<SortFilterIcon />} lines={['Sort &', 'Filter']} width="w-[100px]" />
                    <BigButton icon={<FindIcon />} lines={['Find &', 'Select']} width="w-[100px]" />
                </Group>

                <Group className="w-[130px] justify-center">
                    <BigButton icon={<AnalyzeIcon />} lines={['Analyze', 'Data']} width="w-full" menu={false} />
                </Group>

                <BigButton icon={<SensitivityIcon />} lines={['Sensitivity']} width="w-[152px]" faded />
            </div>
        </div>
    )
}

function RecoveryBar() {
    return (
        <div className="flex h-[62px] shrink-0 items-center gap-4 border-b-2 border-[#c6c3b0] bg-gradient-to-b from-[#fff6df] to-[#faf0da] pt-0.5 pr-4 pl-16 text-2xl text-[#222]">
            <b className="font-semibold">Open recovered workbooks?</b>
            <span>Your recent changes were saved. Do you want to continue working where you left off?</span>
            <div className="ml-auto flex gap-4">
                <button className="flex h-9 w-20 items-center justify-center rounded-lg border-2 border-[#b3ac9a]">Yes</button>
                <button className="flex h-9 w-[70px] items-center justify-center rounded-lg border-2 border-[#b3ac9a]">No</button>
            </div>
        </div>
    )
}

function FormulaBar() {
    return (
        <div className="flex h-[58px] shrink-0 flex-col bg-white font-['Lato',sans-serif] text-2xl text-[#444]">
            <div className="flex h-[52px] items-center">
                <div className="flex h-full w-[172px] items-center justify-between border-2 border-b-0 border-[#b0b0b0] pr-2.5 pl-[18px]">
                    <input aria-label="Name box" defaultValue="C25" className="w-24 bg-transparent text-[23px] text-black" />
                    <svg viewBox="0 0 14 36" className="h-9 w-3.5" fill="#555">
                        <path d="M7 0 14 12H0ZM7 36l7-12H0Z" />
                    </svg>
                </div>
                <button aria-label="Cancel" className="ml-7">
                    <svg viewBox="0 0 24 24" className="size-6" fill="none" stroke="#c9c9c9" strokeWidth="3.500">
                        <path d="m2 2 20 20M22 2 2 22" />
                    </svg>
                </button>
                <button aria-label="Enter" className="ml-8">
                    <svg viewBox="0 0 28 24" className="h-6 w-7" fill="none" stroke="#c9c9c9" strokeWidth="4">
                        <path d="m2 12 8 9L26 2" />
                    </svg>
                </button>
                <button aria-label="Insert function" className="ml-9 font-['Liberation_Serif',serif] text-[33px] leading-9 italic">fx</button>
                <span className="mx-4 h-9 w-0.5 bg-[#e2e2e2]" />
                <input aria-label="Formula" defaultValue="=C10+$L$11" className="min-w-0 flex-1 bg-transparent" />
                <button aria-label="Expand formula bar" className="pr-2">
                    <svg viewBox="0 0 14 12" className="h-3 w-3.5" fill="#555">
                        <path d="M0 0h14L7 12Z" />
                    </svg>
                </button>
            </div>
            <div className="h-1.5 border-y-2 border-[#a0a0a0] bg-[#e8e8e8]" />
        </div>
    )
}

/* ---------- sheet ---------- */

const boxedRows = (row: number) => (row >= 9 && row <= 11) || (row >= 14 && row <= 21) || (row >= 24 && row <= 32)

function cellBorders(col: string, row: number) {
    const inBox = ['C', 'D', 'E'].includes(col)
    const blackRight = (boxedRows(row) && (inBox || col === 'B')) || (row === 1 && col === 'P')
    const blackBottom =
        (inBox && (boxedRows(row) || boxedRows(row + 1))) ||
        (row === 25 && ['H', 'I', 'J', 'K', 'L'].includes(col)) ||
        (row === 2 && col !== 'A') ||
        (row === 1 && col === 'Q')
    const right = blackRight ? 'border-r-2 border-r-black' : ''
    if (row === 23 && ['I', 'J', 'K', 'L'].includes(col)) return 'border-b-4 border-b-black'
    if (blackBottom) return `${right} border-b-2 border-b-black`
    return blackRight ? `${right} pb-0.5` : 'border-b-2 border-b-transparent'
}

function rowLook(row: number) {
    if (row === 1) return 'h-11 align-bottom text-xl leading-[26px]'
    if (row === 2) return 'h-11 align-middle text-[28px] leading-8'
    if (row === 8 || row === 23) return 'h-[34px] align-middle'
    return 'h-8 align-middle'
}

// figures are set one size below the wording around them
function textSize(cell: Cell | undefined, row: number) {
    if (row < 3) return ''
    if (cell?.usd || (typeof cell?.text === 'string' && /^[\d$-]/.test(cell.text))) return 'text-[21px]'
    return 'text-[22px]'
}

function SheetCell({ col, row }: { col: string; row: number }) {
    const cell = cells[`${col}${row}`]
    const boxed = boxedRows(row) && ['C', 'D', 'E'].includes(col)
    let fill = ''
    if (row < 3 && col !== 'A') fill = 'bg-[#d7bd90]'
    if (boxed) fill = 'bg-[#cdeecf]'
    const selected = col === 'C' && row === 25

    return (
        <td
            className={`p-0 pt-0.5 whitespace-nowrap ${rowLook(row)} ${textSize(cell, row)} ${cellBorders(col, row)} ${fill} ${row === 8 ? 'border-t-2 border-t-[#969b98]' : ''} ${selected ? 'relative' : ''} ${cell?.className ?? ''}`}
        >
            {cell?.usd ? (
                <div className={`flex justify-between pl-3 ${boxed ? 'pr-3' : 'pr-3.5'}`}>
                    <span>$</span>
                    <span>{cell.text}</span>
                </div>
            ) : (
                cell?.text
            )}
            {selected && (
                <>
                    <span className="absolute -inset-1 border-4 border-[#1d7648]" />
                    <span className="absolute inset-0 border-2 border-white" />
                    <span className="absolute -right-1.5 -bottom-2 size-3 border-t-2 border-l-2 border-white bg-[#1d7648]" />
                </>
            )}
        </td>
    )
}

function Sheet() {
    return (
        <div className="min-h-0 flex-1 overflow-hidden bg-white">
            <table className="w-full table-fixed border-separate border-spacing-0 font-['Lato',sans-serif] text-[22px] leading-7 text-black [font-variant-ligatures:none]">
                <colgroup>
                    <col className="w-[46px]" />
                    {columns.map((column) => (
                        <col key={column.name} className={column.width} />
                    ))}
                </colgroup>
                <thead>
                    <tr className="bg-gradient-to-b from-white to-[#f5f5f5]">
                        <th className="h-11 border-r-2 border-b-2 border-[#b5b5b5] p-0">
                            <svg viewBox="0 0 44 42" className="h-[42px] w-11" fill="#dcdcdc">
                                <path d="M40 7v30H10Z" />
                            </svg>
                        </th>
                        {columns.map(({ name }) => (
                            <th
                                key={name}
                                scope="col"
                                className={
                                    name === 'C'
                                        ? 'border-b-4 border-b-[#1d7648] bg-[#f1f1f1] p-0 text-xl font-normal text-[#1d7648]'
                                        : 'overflow-hidden border-r-2 border-b-2 border-r-[#e0e0e0] border-b-[#b5b5b5] p-0 text-xl font-normal text-[#555]'
                                }
                            >
                                {name}
                            </th>
                        ))}
                    </tr>
                </thead>
                <tbody>
                    {rowNumbers.map((row) => (
                        <tr key={row}>
                            <th
                                scope="row"
                                className={`border-b-2 border-b-[#dedede] p-0 font-normal ${rowLook(row)} ${row === 8 ? 'border-t-2 border-t-[#969b98]' : ''} ${row === 25 ? 'border-r-4 border-r-[#1d7648] bg-[#f1f1f1] text-[#1d7648]' : 'border-r-2 border-r-[#b5b5b5] bg-gradient-to-r from-white to-[#f5f5f5] text-[#666]'}`}
                            >
                                <span className="text-xl">{row}</span>
                            </th>
                            {columns.map(({ name }) => (
                                <SheetCell key={name} col={name} row={row} />
                            ))}
                        </tr>
                    ))}
                </tbody>
            </table>
        </div>
    )
}

const sheetTabs = [
    { name: 'Case', width: 'w-[158px]' },
    { name: 'Beginning Balance Sheet', width: 'w-[362px]' },
    { name: 'Sales Budget', width: 'w-[220px]' },
    { name: 'Purchases Budget', width: 'w-[280px]' },
    { name: 'S&A Exp. Budget', width: 'w-[268px]' },
    { name: 'Cash Budget', width: 'w-[218px]' },
    { name: 'Proforma Income Statement', width: 'w-[398px]' },
    { name: 'Proforma Balance Sheet', width: 'w-[350px]' },
]

function SheetTabs() {
    return (
        <nav className="flex h-[54px] shrink-0 border-b-2 border-[#a0a0a0] bg-[#f1f1f1] text-2xl whitespace-nowrap text-[#5c5c5c]">
            <div className="flex h-full w-[122px] items-center justify-between border-t-2 border-[#cbcbcb] px-[30px]">
                <button aria-label="Previous sheet">
                    <svg viewBox="0 0 15 22" className="h-[22px] w-[15px]" fill="#b3b3b3"><path d="M15 0v22L0 11Z" /></svg>
                </button>
                <button aria-label="Next sheet">
                    <svg viewBox="0 0 15 22" className="h-[22px] w-[15px]" fill="#b3b3b3"><path d="M0 0v22l15-11Z" /></svg>
                </button>
            </div>
            <div className="w-[202px] border-t-2 border-[#cbcbcb]">
                <div className="h-[42px] border-x-2 border-[#cbcbcb] px-1 pt-1">
                    <button className="flex h-10 w-full items-center justify-center gap-2.5 bg-[#dabf92] text-[23px] font-semibold text-black">
                        <svg viewBox="0 0 20 24" className="h-6 w-5" fill="#5b4a31">
                            <path d="M1 10h18v11q0 2-2 2H3q-2 0-2-2Z" />
                            <path d="M5 11V7q0-5.500 5-5.500T15 7v4" fill="none" stroke="#5b4a31" strokeWidth="2.500" />
                        </svg>
                        Summary
                    </button>
                </div>
            </div>
            {sheetTabs.map(({ name, width }) => {
                if (name === 'S&A Exp. Budget') {
                    return (
                        <button key={name} className={`h-[46px] rounded-b-md bg-white pt-1 text-[23px] font-semibold text-[#1f7f4e] shadow-[0_2px_2px_#999] ${width}`}>
                            {name}
                        </button>
                    )
                }
                return (
                    <div key={name} className={`border-t-2 border-[#cbcbcb] ${name === 'Proforma Balance Sheet' ? 'flex-1' : width}`}>
                        <div className={`h-[42px] border-[#cbcbcb] px-1 pt-1 ${name === 'Purchases Budget' || name === 'Proforma Balance Sheet' ? '' : 'border-r-2'}`}>
                            {name === 'Beginning Balance Sheet' ? (
                                <button className="h-10 w-full bg-[#ffff38] text-[23px] font-semibold text-black">{name}</button>
                            ) : (
                                <button className={name === 'Proforma Balance Sheet' ? 'h-10 w-[344px]' : 'h-10 w-full'}>{name}</button>
                            )}
                        </div>
                    </div>
                )
            })}
        </nav>
    )
}

function StatusBar() {
    return (
        <footer className="flex h-11 shrink-0 items-center bg-gradient-to-b from-[#e3e3e3] to-[#d6d6d6] pl-12 text-2xl text-[#505050]">
            <span>Ready</span>
            <button className="ml-[38px] flex items-center gap-1">
                <AccessibilityIcon />
                Accessibility: Investigate
            </button>
            <div className="ml-auto flex h-full items-center pr-12">
                <button aria-label="Normal view" className="flex h-full w-[74px] items-center justify-center bg-[#a6a6a6]">
                    <svg viewBox="0 0 26 26" className="size-[26px]" fill="none" stroke="white" strokeWidth="2">
                        <path d="M1 1h24v24H1ZM9 1v24M17 1v24M1 9h24M1 17h24" />
                    </svg>
                </button>
                <button aria-label="Page layout view" className="flex h-full w-[70px] items-center justify-center">
                    <svg viewBox="0 0 28 26" className="h-[26px] w-7" fill="none" stroke="#555" strokeWidth="2">
                        <path d="M1 1h26v24H1ZM6 5h16v16H6ZM9 9h10M9 13h10M9 17h10" />
                    </svg>
                </button>
                <button aria-label="Page break view" className="flex h-full w-[72px] items-center justify-center">
                    <svg viewBox="0 0 28 26" className="h-[26px] w-7" fill="none" stroke="#555" strokeWidth="2">
                        <path d="M1 1h26v24H1ZM10 1v15M18 1v15H1" />
                    </svg>
                </button>
                <button aria-label="Zoom out" className="flex w-12 justify-center"><span className="h-1 w-4 bg-[#444]" /></button>
                <input
                    type="range"
                    aria-label="Zoom"
                    defaultValue={50}
                    className="h-2 w-[196px] appearance-none rounded-full bg-[#989898] [&::-webkit-slider-thumb]:size-[22px] [&::-webkit-slider-thumb]:appearance-none [&::-webkit-slider-thumb]:rounded-full [&::-webkit-slider-thumb]:bg-[#f5f5f5] [&::-webkit-slider-thumb]:shadow"
                />
                <button aria-label="Zoom in" className="flex w-12 justify-center">
                    <svg viewBox="0 0 16 16" className="size-4" stroke="#444" strokeWidth="4"><path d="M8 0v16M0 8h16" /></svg>
                </button>
                <span className="w-20 text-right text-[23px]">100%</span>
            </div>
        </footer>
    )
}

/* ---------- floating screen preview ---------- */

const previewText: [number, number, string, number?][] = [
    [20, 174, 'Inventory Purchases Budget', 1],
    [20, 185, 'For the Month In', 1],
    [20, 208, 'Section 1: Inventory Purchases'],
    [24, 218, 'Cost of Goods Sold'],
    [24, 229, 'Desired Ending Inventory'],
    [28, 240, 'Inventory Needs'],
    [24, 251, 'Less: Beginning Inventory'],
    [28, 262, 'Inventory Purchases'],
    [20, 296, 'Section 2: Cash Payments'],
    [24, 306, 'For Purchases this month'],
    [24, 317, 'For purchases last month'],
    [28, 328, 'Total Cash Payments'],
    [20, 360, 'Note: You do not need to complete the budget for January.'],
    [42, 371, 'You only need January COGS for the Desired Ending Inventory for December.'],
    [188, 196, 'October', 1],
    [246, 196, 'November', 1],
    [306, 196, 'December', 1],
    [370, 196, 'January', 1],
    [454, 252, 'Cost of Goods Sold as a percentage of total Sales'],
    [454, 263, 'Desired Ending Inventory as a percentage of next month COGS'],
    [454, 274, 'All purchases of inventory are on credit and the payment of these credit purchases are made in the following pattern:'],
    [454, 285, 'Month of Purchases'],
    [454, 296, 'Month following Purchases'],
    [710, 252, '75%', 1],
    [710, 263, '20%', 1],
    [710, 285, '60%', 1],
    [710, 296, '40%', 1],
    [550, 325, 'October', 1],
    [606, 325, 'November', 1],
    [670, 325, 'January', 1],
    [474, 335, 'Cash Sales'],
    [474, 345, 'Credit Sales'],
    [474, 355, 'Total Sales'],
    [490, 416, 'October'],
    [490, 427, 'November'],
    [490, 437, 'December'],
    [490, 448, 'January'],
    [624, 416, '110000'],
    [624, 427, '116800'],
    [624, 437, '134320'],
    [624, 448, '105000'],
    [84, 148, 'earned'],
    [190, 148, 'possible'],
    [257, 148, 'cell'],
    [528, 148, 'Start File 18 Keenan'],
    [726, 148, 'Press F9 to grade'],
    [90, 161, '58', 1],
    [196, 161, '24', 1],
    [18, 98, 'Open recovered workbooks?', 1],
    [122, 98, 'Your recent changes were saved. Do you want to continue working where you left off?'],
    [112, 114, '=C14/$C$18'],
    [42, 33, 'Insert'],
    [80, 33, 'Draw'],
    [112, 33, 'Page Layout'],
    [174, 33, 'Formulas'],
    [224, 33, 'Data'],
    [256, 33, 'Review'],
    [296, 33, 'View'],
    [336, 33, 'Tell me'],
    [72, 55, 'Calibri (Body)'],
    [416, 55, 'Custom'],
    [340, 55, 'Wrap Text'],
    [340, 75, 'Merge & Center'],
    [110, 520, 'Case'],
    [262, 520, 'Sales Budget'],
    [416, 520, 'S&A Exp. Budget'],
    [496, 520, 'Cash Budget'],
    [560, 520, 'Proforma Income Statement'],
    [680, 520, 'Proforma Balance Sheet'],
]

const previewBoxes = [
    ...[212, 223, 234, 245, 256, 300].flatMap((y) => [171, 232, 293].map((x) => [x, y])),
    [354, 212],
]

function ScreenPreview() {
    return (
        <div className="absolute right-6 bottom-6 rounded-xl bg-white p-2 shadow-[0_0_70px_rgba(0,0,0,0.28)]">
            <svg viewBox="0 0 862 538" className="h-[181px] w-[288px] border border-[#9a9a9a]" fontFamily="Lato, sans-serif" fontSize="8.500">
                <path d="M0 0h862v538H0Z" fill="#fff" />
                <path d="M0 0h862v23H0Z" fill="#0a8248" />
                <path d="M0 23h862v62H0Z" fill="#f3f3f3" />
                <path d="M0 85h862v18H0Z" fill="#fdf3dc" />
                <path d="M0 122h862v13H0Z" fill="#f6f6f6" />
                <path d="M17 135h845v29H17Z" fill="#d7bd90" />
                <path d="M0 165h862M0 103h862M0 122h862" stroke="#8c8c8c" />
                <path d="M171 134h61" stroke="#1d7648" strokeWidth="3" />
                <path d="M8 10h28M80 6v9h8v-9ZM96 6v9h8v-9ZM112 6v9h8v-9ZM150 6v9h8v-9ZM832 7h6v6h-6ZM850 7h6v6h-6Z" stroke="#cfe8db" strokeWidth="1.500" fill="none" />
                <rect x="44" y="6" width="24" height="8" rx="4" fill="#2b5540" />
                <text x="342" y="14" fill="#e5f3ec">start_file_18_keenan_Excel_3_Master_Budget_START</text>
                <text x="6" y="33" fontWeight="bold">Home</text>
                <path d="M6 38h22" stroke="#217346" strokeWidth="2" />
                <path d="M68 45h84v13H68ZM156 45h28v13h-28ZM412 45h92v13h-92Z" fill="#fff" stroke="#ccc" />
                <g fill="none" stroke="#666" strokeWidth="1.500">
                    <path d="M192 55l4-8 4 8M210 55l4-8 4 8M74 75v-8h5v8ZM92 75l3-8M106 67v7h5v-7M132 67h10v8h-10ZM168 67h8v8h-8ZM192 75l4-8 4 8M234 47h10M234 51h10M250 47h10M250 51h10M234 67h10M234 71h10M250 67h10M250 71h10M290 50h10M290 68h10M304 68h10M416 75l4-8M436 75l4-8M454 67v6M476 75h8M494 75h8" />
                    <path d="M522 47h17v16h-17ZM554 47h17v16h-17ZM586 47h17v16h-17ZM626 45h10v8h-10ZM626 58h10v8h-10ZM626 71h10v8h-10ZM686 45l5 8M708 49h14l-6 12ZM738 54a6 6 0 1 0 12 0 6 6 0 1 0-12 0M778 45h20v22h-20Z" />
                    <path d="M10 48h14v18H10Z" stroke="#ccc" />
                    <path d="M822 46h16v20h-16Z" stroke="#a3d2ea" />
                </g>
                <path d="M527 47h7v16h-7Z" fill="#f06a6f" />
                <path d="M560 53h11v10h-11ZM590 50h10v8h-10ZM628 48h8v3h-8Z" fill="#62a9e0" />
                <path d="M264 45h12v14h-12ZM230 65h14v14h-14Z" fill="#00000033" />
                <path d="M165 76h10v3h-10Z" fill="#ffe800" />
                <path d="M188 76h10v3h-10Z" fill="#f00" />
                <text x="514" y="73">Conditional</text>
                <text x="514" y="81">Formatting</text>
                <text x="556" y="73">Format</text>
                <text x="554" y="81">as Table</text>
                <text x="590" y="73">Cell</text>
                <text x="587" y="81">Styles</text>
                <text x="638" y="51">Insert</text>
                <text x="638" y="64">Delete</text>
                <text x="638" y="77">Format</text>
                <text x="707" y="73">Sort &amp;</text>
                <text x="709" y="81">Filter</text>
                <text x="738" y="73">Find &amp;</text>
                <text x="738" y="81">Select</text>
                <text x="776" y="73">Analyze</text>
                <text x="780" y="81">Data</text>
                <text x="770" y="34" fill="#217346">Share</text>
                <text x="810" y="34" fill="#217346">Comments</text>
                {previewBoxes.map(([x, y]) => (
                    <g key={`${x}-${y}`}>
                        <path d={`M${x} ${y}h60v10h-60Z`} fill="#cdeecf" stroke="#5a7a60" />
                        <path d={`M${x + 34} ${y + 5}h22M${x + 4} ${y + 5}h3`} stroke="#666" strokeWidth="3" />
                    </g>
                ))}
                <path d="M171 311h60v10h-60ZM171 322h60v10h-60Z" fill="#ff9fd0" stroke="#a06080" />
                <path d="M204 316h22M204 327h22" stroke="#704060" strokeWidth="3" />
                <path d="M171 199h242M534 327h176M534 348h176M534 358h176" stroke="#555" strokeWidth="1.500" />
                <path d="M862 243H450v153h412" fill="none" stroke="#777" strokeWidth="2" />
                <path d="M560 333h26M620 333h26M686 333h22M560 343h26M620 343h26M686 343h22M560 353h26M620 353h26M680 353h28" stroke="#777" strokeWidth="3" />
                <path d="M4 148v350" stroke="#aaa" strokeWidth="4" strokeDasharray="4 7" />
                <path d="M0 509h862v17H0Z" fill="#f1f1f1" />
                <path d="M0 526h862v12H0Z" fill="#d8d8d8" />
                <path d="M38 511h55v13H38Z" fill="#dabf92" />
                <path d="M147 511h96v13h-96Z" fill="#ffff38" />
                <path d="M320 507h80v18h-80Z" fill="#fff" />
                {previewText.map(([x, y, text, bold]) => (
                    <text key={`${x}-${y}`} x={x} y={y} fill="#222" fontWeight={bold ? 700 : 400}>{text}</text>
                ))}
                <text x="48" y="520" fontWeight="bold">Summary</text>
                <text x="152" y="520" fontWeight="bold">Beginning Balance Sheet</text>
                <text x="327" y="520" fontWeight="bold" fill="#1f7f4e">Purchases Budget</text>
                <text x="14" y="535" fill="#555">Ready</text>
                <text x="48" y="535" fill="#555">Accessibility: Investigate</text>
                <path d="M762 472h96v62h-96Z" fill="#fff" stroke="#e5e5e5" />
                <path d="M767 475h87v4h-87Z" fill="#1d8a57" />
                <path d="M767 488h87v5h-87Z" fill="#e3cfae" />
                <path d="M786 498h34v8h-34ZM786 510h20v6h-20Z" fill="#bfe6c6" />
            </svg>
        </div>
    )
}

export default function App() {
    return (
        <main className="relative flex h-screen flex-col overflow-hidden bg-white font-['Inter',sans-serif]">
            <TitleBar />
            <Ribbon />
            <RecoveryBar />
            <FormulaBar />
            <Sheet />
            <SheetTabs />
            <StatusBar />
            <ScreenPreview />
        </main>
    )
}
